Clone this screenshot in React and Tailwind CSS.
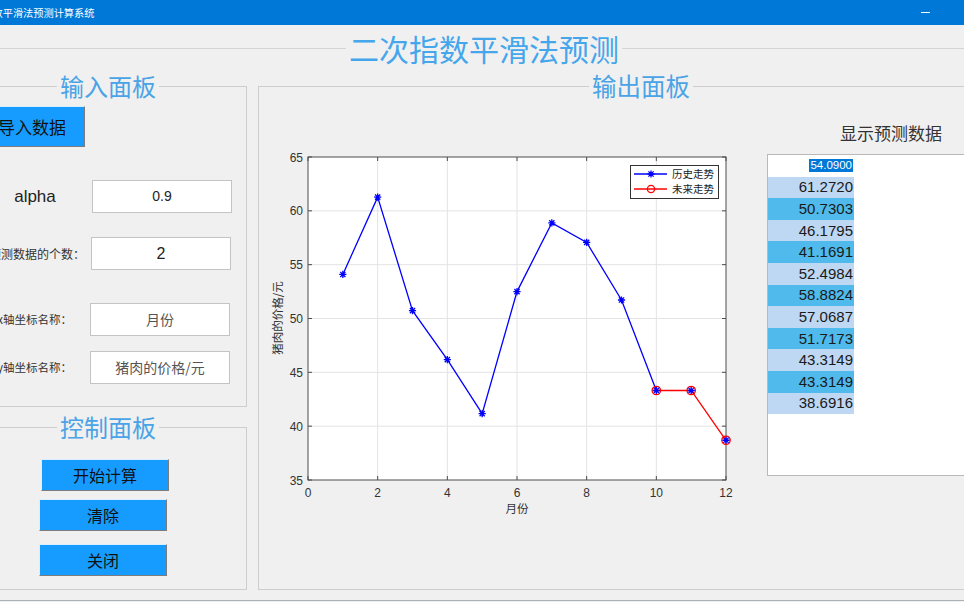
import React from "react";

const HIST = [54.09, 61.272, 50.7303, 46.1795, 41.1691, 52.4984, 58.8824, 57.0687, 51.7173, 43.3149];
const FUT = [
  [10, 43.3149],
  [11, 43.3149],
  [12, 38.6916],
];
const TABLE = ["54.0900", "61.2720", "50.7303", "46.1795", "41.1691", "52.4984", "58.8824", "57.0687", "51.7173", "43.3149", "43.3149", "38.6916"];

const X = (i) => 46 + (i * 418) / 12;
const Y = (v) => 17 + ((65 - v) * 323) / 30;

function Star({ cx, cy, color = "#0000ff" }) {
  const s = 3.6;
  const d = 2.6;
  return (
    <path
      d={`M${cx - s} ${cy}h${2 * s}M${cx} ${cy - s}v${2 * s}M${cx - d} ${cy - d}l${2 * d} ${2 * d}M${cx - d} ${cy + d}l${2 * d} ${-2 * d}`}
      stroke={color}
      strokeWidth="1.3"
      fill="none"
    />
  );
}

function Chart() {
  const font = "Liberation Sans, Noto Sans CJK SC, sans-serif";
  const cjk = "Noto Sans CJK SC, sans-serif";
  const xt = [0, 2, 4, 6, 8, 10, 12];
  const yt = [35, 40, 45, 50, 55, 60, 65];
  const histPts = HIST.map((v, i) => `${X(i + 1)},${Y(v)}`).join(" ");
  const futPts = FUT.map(([i, v]) => `${X(i)},${Y(v)}`).join(" ");
  const allStars = [...HIST.map((v, i) => [i + 1, v]), [11, 43.3149], [12, 38.6916]];
  return (
    <svg width="500" height="380" viewBox="0 0 500 380" className="block shrink-0">
      <rect x="46" y="17" width="418" height="323" fill="#ffffff" />
      {xt.slice(1, -1).map((t) => (
        <line key={"gx" + t} x1={X(t)} x2={X(t)} y1="17" y2="340" stroke="#e3e3e3" strokeWidth="1" />
      ))}
      {yt.slice(1, -1).map((t) => (
        <line key={"gy" + t} x1="46" x2="464" y1={Y(t)} y2={Y(t)} stroke="#e3e3e3" strokeWidth="1" />
      ))}
      <rect x="46" y="17" width="418" height="323" fill="none" stroke="#4d4d4d" strokeWidth="1" />
      {xt.map((t) => (
        <g key={"tx" + t}>
          <line x1={X(t)} x2={X(t)} y1="340" y2="336" stroke="#4d4d4d" />
          <line x1={X(t)} x2={X(t)} y1="17" y2="21" stroke="#4d4d4d" />
          <text x={X(t)} y="357" textAnchor="middle" fontFamily={font} fontSize="12" fill="#333">
            {t}
          </text>
        </g>
      ))}
      {yt.map((t) => (
        <g key={"ty" + t}>
          <line x1="46" x2="50" y1={Y(t)} y2={Y(t)} stroke="#4d4d4d" />
          <line x1="464" x2="460" y1={Y(t)} y2={Y(t)} stroke="#4d4d4d" />
          <text x="41" y={Y(t) + 4.5} textAnchor="end" fontFamily={font} fontSize="12" fill="#333">
            {t}
          </text>
        </g>
      ))}
      <text x="255" y="373" textAnchor="middle" fontFamily={cjk} fontSize="11.5" fill="#333">
        月份
      </text>
      <text
        x="0"
        y="0"
        transform="translate(20 178) rotate(-90)"
        textAnchor="middle"
        fontFamily={cjk}
        fontSize="11.5"
        fill="#333"
      >
        猪肉的价格/元
      </text>
      <polyline points={histPts} fill="none" stroke="#0000ff" strokeWidth="1.3" />
      <polyline points={futPts} fill="none" stroke="#ff0000" strokeWidth="1.3" />
      {FUT.map(([i, v]) => (
        <circle key={"c" + i} cx={X(i)} cy={Y(v)} r="4.2" fill="none" stroke="#ff0000" strokeWidth="1.3" />
      ))}
      {allStars.map(([i, v], k) => (
        <Star key={"s" + k} cx={X(i)} cy={Y(v)} />
      ))}
      <rect x="368.5" y="25.5" width="88" height="33" fill="#ffffff" stroke="#333" strokeWidth="1" />
      <line x1="372" x2="405" y1="34" y2="34" stroke="#0000ff" strokeWidth="1.3" />
      <Star cx={389} cy={34} />
      <text x="410" y="38" fontFamily={cjk} fontSize="10.5" fill="#222">
        历史走势
      </text>
      <line x1="372" x2="405" y1="49" y2="49" stroke="#ff0000" strokeWidth="1.3" />
      <circle cx="389" cy="49" r="3.6" fill="none" stroke="#ff0000" strokeWidth="1.3" />
      <text x="410" y="53" fontFamily={cjk} fontSize="10.5" fill="#222">
        未来走势
      </text>
    </svg>
  );
}

const btn =
  "flex items-center justify-center bg-[#169cff] border border-t-[#d9eeff] border-l-[#d9eeff] border-r-[#7c7c7c] border-b-[#7c7c7c] text-[16px] text-[#111]";
const inp =
  "flex items-center justify-center bg-white border border-[#c4c4c4] h-[33px] w-[140px]";
const legendCls = "mx-auto px-[3px] text-[24px] leading-[28px] text-[#4aa3e6]";

export default function App() {
  return (
    <div className="w-[964px] h-[602px] overflow-hidden bg-[#f0f0f0] font-['Noto_Sans_CJK_SC',sans-serif]">
      <div className="h-[25px] bg-[#0078d7] flex items-center overflow-hidden">
        <span className="ml-[-38px] text-[10.2px] leading-[12px] text-white whitespace-nowrap">
          二次指数平滑法预测计算系统
        </span>
        <div className="ml-auto mr-[34px] w-[9px] h-[1px] bg-white mt-[-1px]" />
      </div>
      <fieldset className="mt-[5px] ml-[-52px] w-[1044px] border border-[#d4d4d4] border-b-[#a9b2bb] pl-[20px] pb-[10px]">
        <legend className="ml-[377px] px-[3px] text-[30px] leading-[36px] text-[#45a6ec]">二次指数平滑法预测</legend>
        <div className="flex pt-[6px]">
          <div className="w-[278px] shrink-0 flex flex-col">
            <fieldset className="border border-[#cdcdcd] pb-[22px]">
              <legend className={legendCls}>输入面板</legend>
              <div className={`${btn} mt-[6px] ml-[9px] w-[106px] h-[41px] text-[17px]`}>导入数据</div>
              <div className="flex items-center mt-[33px]">
                <div className="w-[122px] pl-[8px] text-center font-['Liberation_Sans',sans-serif] text-[17px] text-[#222]">
                  alpha
                </div>
                <div className={`${inp} font-['Liberation_Sans',sans-serif] text-[14px] text-[#222]`}>0.9</div>
              </div>
              <div className="flex items-center mt-[24px]">
                <div className="w-[115px] shrink-0 text-[12px] text-[#333] whitespace-nowrap flex justify-end">
                  <span>预测数据的个数：</span>
                </div>
                <div className={`${inp} ml-[6px] font-['Liberation_Sans',sans-serif] text-[16px] text-[#222]`}>2</div>
              </div>
              <div className="flex items-center mt-[33px]">
                <div className="w-[102px] shrink-0 text-[11.5px] text-[#333] whitespace-nowrap flex justify-end">
                  <span>x轴坐标名称：</span>
                </div>
                <div className={`${inp} ml-[18px] text-[14px] text-[#555]`}>月份</div>
              </div>
              <div className="flex items-center mt-[15px]">
                <div className="w-[102px] shrink-0 text-[11.5px] text-[#333] whitespace-nowrap flex justify-end">
                  <span>y轴坐标名称：</span>
                </div>
                <div className={`${inp} ml-[18px] text-[14px] text-[#555]`}>猪肉的价格/元</div>
              </div>
            </fieldset>
            <fieldset className="mt-[6px] border border-[#cdcdcd] pb-[13px] flex-1">
              <legend className={legendCls}>控制面板</legend>
              <div className={`${btn} mt-[18px] ml-[71px] w-[128px] h-[32px]`}>开始计算</div>
              <div className={`${btn} mt-[8px] ml-[69px] w-[128px] h-[32px]`}>清除</div>
              <div className={`${btn} mt-[13px] ml-[69px] w-[128px] h-[32px]`}>关闭</div>
            </fieldset>
          </div>
          <fieldset className="ml-[11px] w-[754px] shrink-0 border border-[#cdcdcd]">
            <legend className="ml-[330px] px-[3px] text-[24.5px] leading-[28px] text-[#4aa3e6]">输出面板</legend>
            <div className="flex items-start">
              <div className="ml-[3px] mt-[40px]">
                <Chart />
              </div>
              <div className="ml-[5px] flex flex-col">
                <div className="mt-[21px] ml-[73px] text-[17px] leading-[24px] text-[#333] whitespace-nowrap">显示预测数据</div>
                <div className="mt-[9px] w-[240px] h-[322px] border border-[#b9b9b9] bg-white">
                  {TABLE.map((v, i) => {
                    const bg = i === 0 ? "bg-white" : i % 2 === 1 ? "bg-[#bed7f3]" : "bg-[#4fbaeb]";
                    return (
                      <div key={i} className={`w-[86px] h-[21.6px] flex items-center justify-end pr-[1px] ${bg}`}>
                        {i === 0 ? (
                          <span className="bg-[#0078d7] text-white font-['Liberation_Sans',sans-serif] text-[11.5px] leading-[13px] px-[1px]">
                            {v}
                          </span>
                        ) : (
                          <span className="font-['Liberation_Sans',sans-serif] text-[15px] leading-[18px] text-[#1a1a1a]">
                            {v}
                          </span>
                        )}
                      </div>
                    );
                  })}
                </div>
              </div>
            </div>
          </fieldset>
        </div>
      </fieldset>
    </div>
  );
}
